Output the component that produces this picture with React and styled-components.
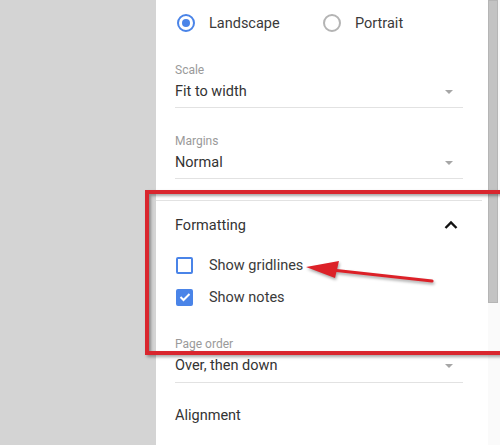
import React from "react";
import styled, { createGlobalStyle } from "styled-components";

const Global = createGlobalStyle`
  html, body { margin: 0; padding: 0; background: #fff; }
  body { font-family: Roboto, "Liberation Sans", Arial, sans-serif; }
`;

const Screen = styled.div`
  position: relative;
  width: 500px;
  height: 445px;
  display: flex;
  overflow: hidden;
  background: #fff;
`;

const Backdrop = styled.div`
  width: 156px;
  flex: none;
  background: #d4d4d4;
`;

const Panel = styled.div`
  width: 332px;
  flex: none;
  background: #fff;
  display: flex;
  flex-direction: column;
`;

const Inner = styled.div`
  padding: 0 25px 0 19px;
  display: flex;
  flex-direction: column;
`;

const Scrollbar = styled.div`
  width: 12px;
  flex: none;
  background: #fafafa;
  display: flex;
  flex-direction: column;
  padding-right: 2px;
`;

const Thumb = styled.div`
  width: 10px;
  height: 303px;
  background: #c3c3c3;
  border: 1px solid #b5b5b5;
  box-sizing: border-box;
`;

const RadioRow = styled.div`
  height: 46px;
  display: flex;
  align-items: center;
`;

const RadioOption = styled.label`
  display: flex;
  align-items: center;
  gap: 14px;
  width: ${(p) => p.$w}px;
  padding-left: 2px;
  font-size: 14.5px;
  color: #3a3a3a;
`;

const RadioCircle = styled.span`
  width: 18px;
  height: 18px;
  box-sizing: border-box;
  border-radius: 50%;
  border: 2px solid ${(p) => (p.$on ? "#4a84e8" : "#b4b4b4")};
  display: flex;
  align-items: center;
  justify-content: center;
  &::after {
    content: "";
    width: 8px;
    height: 8px;
    border-radius: 50%;
    background: #4a84e8;
    display: ${(p) => (p.$on ? "block" : "none")};
  }
`;

const Field = styled.div`
  margin-top: ${(p) => p.$mt}px;
  display: flex;
  flex-direction: column;
  border-bottom: 1px solid #e2e2e2;
  padding-bottom: ${(p) => p.$pb}px;
`;

const FieldLabel = styled.div`
  font-size: 12px;
  line-height: 16px;
  color: #9a9a9a;
`;

const FieldValue = styled.div`
  margin-top: ${(p) => p.$gap}px;
  font-size: 14.5px;
  line-height: 20px;
  color: #333;
  display: flex;
  align-items: center;
  justify-content: space-between;
  padding-right: 10px;
`;

const Caret = styled.span`
  width: 0;
  height: 0;
  border-left: 4.5px solid transparent;
  border-right: 4.5px solid transparent;
  border-top: 4.5px solid #a6a6a6;
`;

const Divider = styled.div`
  margin-top: 21px;
  margin-right: 6px;
  height: 1px;
  background: #e2e2e2;
`;

const SectionHeader = styled.div`
  height: 48px;
  display: flex;
  align-items: center;
  justify-content: space-between;
  font-size: 14.5px;
  color: #333;
  padding-right: 5px;
`;

const CheckRow = styled.div`
  height: 32px;
  display: flex;
  align-items: center;
  gap: 16px;
  padding-left: 1px;
  font-size: 14.5px;
  color: #3a3a3a;
`;

const CheckBox = styled.span`
  width: 17px;
  height: 17px;
  box-sizing: border-box;
  border-radius: 2px;
  border: 2px solid #4a84e8;
  background: ${(p) => (p.$on ? "#4a84e8" : "#fff")};
  display: flex;
  align-items: center;
  justify-content: center;
`;

const Heading = styled.div`
  margin-top: 24px;
  font-size: 14.5px;
  color: #333;
`;

const RedBox = styled.div`
  position: absolute;
  left: 145px;
  top: 190px;
  width: 380px;
  height: 165px;
  box-sizing: border-box;
  border: 4px solid #d9262e;
  box-shadow: 2px 2px 3px rgba(0, 0, 0, 0.35), inset 2px 2px 3px rgba(0, 0, 0, 0.35);
  pointer-events: none;
`;

const ArrowSvg = styled.svg`
  position: absolute;
  left: 0;
  top: 0;
  pointer-events: none;
  filter: drop-shadow(1px 2px 1.5px rgba(0, 0, 0, 0.35));
`;

export default function App() {
  return (
    <>
      <Global />
      <Screen>
        <Backdrop />
        <Panel>
          <Inner>
            <RadioRow>
              <RadioOption $w={144}>
                <RadioCircle $on />
                Landscape
              </RadioOption>
              <RadioOption $w={140}>
                <RadioCircle />
                Portrait
              </RadioOption>
            </RadioRow>
            <Field $mt={16} $pb={5}>
              <FieldLabel>Scale</FieldLabel>
              <FieldValue $gap={4}>
                Fit to width
                <Caret />
              </FieldValue>
            </Field>
            <Field $mt={25} $pb={5}>
              <FieldLabel>Margins</FieldLabel>
              <FieldValue $gap={4}>
                Normal
                <Caret />
              </FieldValue>
            </Field>
          </Inner>
          <Divider />
          <Inner>
            <SectionHeader>
              Formatting
              <svg width="14" height="10" viewBox="0 0 14 10">
                <path d="M1.5 8 L7 2.5 L12.5 8" fill="none" stroke="#111" strokeWidth="2.4" />
              </svg>
            </SectionHeader>
            <CheckRow>
              <CheckBox />
              Show gridlines
            </CheckRow>
            <CheckRow>
              <CheckBox $on>
                <svg width="12" height="10" viewBox="0 0 12 10">
                  <path d="M1.5 5 L4.5 8 L10.5 2" fill="none" stroke="#fff" strokeWidth="2" />
                </svg>
              </CheckBox>
              Show notes
            </CheckRow>
            <Field $mt={23} $pb={6}>
              <FieldLabel>Page order</FieldLabel>
              <FieldValue $gap={4}>
                Over, then down
                <Caret />
              </FieldValue>
            </Field>
            <Heading>Alignment</Heading>
          </Inner>
        </Panel>
        <Scrollbar>
          <Thumb />
        </Scrollbar>
        <RedBox />
        <ArrowSvg width="500" height="445" viewBox="0 0 500 445">
          <path d="M432 281 L332 270" stroke="#dc2128" strokeWidth="3.2" strokeLinecap="round" fill="none" />
          <polygon points="306,267 339,261 335,278" fill="#dc2128" />
        </ArrowSvg>
      </Screen>
    </>
  );
}
